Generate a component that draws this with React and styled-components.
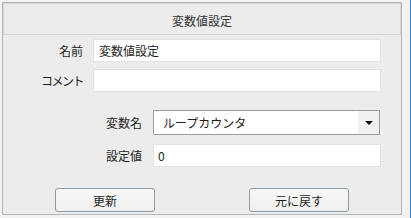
import React, { useState } from 'react'
import styled, { createGlobalStyle } from 'styled-components'

const Global = createGlobalStyle`
    html, body {
        margin: 0;
        padding: 0;
        background: #f3f3f3;
        font-family: "Noto Sans CJK JP", "Noto Sans", sans-serif;
        font-size: 12px;
        color: #1e1e1e;
    }
`

const Frame = styled.div`
    width: 411px;
    height: 218px;
    box-sizing: border-box;
    padding: 2px 8px 3px 2px;
    border-right: 1px solid #2b8ee6;
    background: #f3f3f3;
`

const Panel = styled.div`
    height: 100%;
    box-sizing: border-box;
    border: 1px solid #b5b5b5;
    background: #ececec;
    display: flex;
    flex-direction: column;
`

const Header = styled.div`
    height: 32px;
    box-sizing: border-box;
    border: 1px solid #d6d6d6;
    display: flex;
    align-items: center;
    justify-content: center;
    color: #333;
    padding-top: 2px;
`

const Form = styled.div`
    display: flex;
    flex-direction: column;
    padding: 4px 20px 0 0;
`

const Row = styled.div`
    display: grid;
    grid-template-columns: ${p => p.$label}px 1fr;
    column-gap: ${p => p.$gap}px;
    align-items: center;
    margin-top: ${p => p.$top || 0}px;
`

const Label = styled.label`
    text-align: right;
    letter-spacing: ${p => p.$tight ? '-1.5px' : '0'};
`

const Input = styled.input`
    height: 23px;
    box-sizing: border-box;
    border: 1px solid #e2e2e2;
    background: #fff;
    font: inherit;
    font-size: 12px;
    color: #1e1e1e;
    padding: 0 ${p => p.$pad || 5}px;
    outline: none;
    min-width: 0;
`

const Select = styled.div`
    height: 25px;
    box-sizing: border-box;
    border: 1px solid #9c9c9c;
    background: #fff;
    display: flex;
    align-items: center;
    margin-right: 1px;
`

const SelectText = styled.span`
    flex: 1;
    padding-left: 9px;
`

const Arrow = styled.span`
    width: 21px;
    height: 100%;
    background: #f1f1f1;
    display: flex;
    align-items: center;
    justify-content: center;
    &::after {
        content: '';
        border-left: 4px solid transparent;
        border-right: 4px solid transparent;
        border-top: 4px solid #111;
    }
`

const Buttons = styled.div`
    display: flex;
    gap: 94px;
    padding-left: 52px;
    margin-top: 21px;
`

const Button = styled.button`
    width: 100px;
    height: 24px;
    box-sizing: border-box;
    border: 1px solid #8f9aa6;
    border-radius: 3px;
    background: linear-gradient(#f7f7f7, #efefef);
    font: inherit;
    font-size: 12px;
    color: #1e1e1e;
    padding: 0;
    cursor: pointer;
`

function App() {
    const [name, setName] = useState('変数値設定')
    const [comment, setComment] = useState('')
    const [value, setValue] = useState('0')

    return (
        <Frame>
            <Global />
            <Panel>
                <Header>変数値設定</Header>
                <Form>
                    <Row $label={80} $gap={10}>
                        <Label>名前</Label>
                        <Input value={name} onChange={e => setName(e.target.value)} />
                    </Row>
                    <Row $label={80} $gap={10} $top={7}>
                        <Label $tight>コメント</Label>
                        <Input value={comment} onChange={e => setComment(e.target.value)} />
                    </Row>
                    <Row $label={139} $gap={11} $top={18}>
                        <Label>変数名</Label>
                        <Select>
                            <SelectText>ループカウンタ</SelectText>
                            <Arrow />
                        </Select>
                    </Row>
                    <Row $label={139} $gap={11} $top={9}>
                        <Label>設定値</Label>
                        <Input $pad={4} value={value} onChange={e => setValue(e.target.value)} />
                    </Row>
                    <Buttons>
                        <Button>更新</Button>
                        <Button>元に戻す</Button>
                    </Buttons>
                </Form>
            </Panel>
        </Frame>
    )
}

export default App
